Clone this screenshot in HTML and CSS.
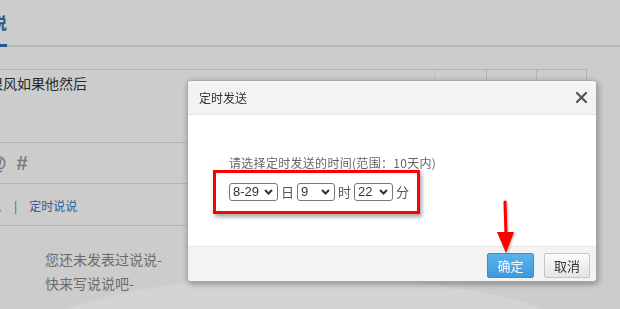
FILE: index.html
```html
<!DOCTYPE html>
<html lang="zh-CN">
<head>
    <meta charset="UTF-8" />
    <title>定时发送</title>
    <link rel="stylesheet" href="styles.css">
</head>
<body>
    <div class="page">
        <div class="tabs">
            <span class="tab active">我的说说</span>
        </div>

        <div class="editor">
            <div class="editor-text">很风如果他然后</div>
            <div class="editor-cell light"></div>
            <div class="editor-cell"></div>
            <div class="editor-cell"></div>
        </div>

        <div class="tools">
            <span class="tool">@</span>
            <span class="tool">#</span>
        </div>

        <div class="links">
            <a class="link first">全部说说</a>
            <span class="sep">|</span>
            <a class="link">定时说说</a>
        </div>

        <div class="empty">
            <p>您还未发表过说说-</p>
            <p>快来写说说吧-</p>
        </div>
    </div>

    <div class="mask"></div>

    <div class="dialog">
        <div class="dialog-head">
            <span class="dialog-title">定时发送</span>
            <svg class="dialog-close" width="11" height="11" viewBox="0 0 11 11">
                <path d="M1 1 L10 10 M10 1 L1 10" stroke="#555" stroke-width="2.2" stroke-linecap="round" />
            </svg>
        </div>
        <div class="dialog-body">
            <div class="hint">请选择定时发送的时间(范围：10天内)</div>
            <div class="pick">
                <div class="sel sel-day">
                    <span>8-29</span>
                    <svg width="9" height="6" viewBox="0 0 9 6"><path d="M1 1 L4.5 4.5 L8 1" fill="none" stroke="#333" stroke-width="2" /></svg>
                </div>
                <span class="unit">日</span>
                <div class="sel sel-hour">
                    <span>9</span>
                    <svg width="9" height="6" viewBox="0 0 9 6"><path d="M1 1 L4.5 4.5 L8 1" fill="none" stroke="#333" stroke-width="2" /></svg>
                </div>
                <span class="unit">时</span>
                <div class="sel sel-min">
                    <span>22</span>
                    <svg width="9" height="6" viewBox="0 0 9 6"><path d="M1 1 L4.5 4.5 L8 1" fill="none" stroke="#333" stroke-width="2" /></svg>
                </div>
                <span class="unit">分</span>
            </div>
        </div>
        <div class="dialog-foot">
            <button class="btn btn-ok">确定</button>
            <button class="btn btn-cancel">取消</button>
        </div>
    </div>

    <svg class="arrow" width="24" height="60" viewBox="0 0 24 60">
        <path d="M12 2 L13 36" stroke="#f00" stroke-width="3" stroke-linecap="round" />
        <path d="M4 32 L21 32 L13 53 Z" fill="#f00" />
    </svg>
</body>
</html>
```

FILE: styles.css
```css
html, body {
    margin: 0;
    padding: 0;
    height: 100%;
    overflow: hidden;
}

body {
    background: #fff;
    font-family: "Noto Sans CJK SC", "Liberation Sans", sans-serif;
    color: #333;
}

.page {
    width: 627px;
    margin-left: -40px;
}

/* tabs */
.tabs {
    height: 45px;
    margin-right: -60px;
    border-bottom: 2px solid #e2e2e2;
    display: flex;
    align-items: flex-end;
}

.tab {
    font-size: 16px;
    line-height: 20px;
    height: 32px;
    margin-bottom: -2px;
    margin-left: -17px;
    color: #2f6db4;
    font-weight: bold;
    border-bottom: 3px solid #2f6db4;
}

/* editor */
.editor {
    margin-top: 22px;
    height: 72px;
    border-top: 1px solid #e2e2e2;
    border-right: 1px solid #e2e2e2;
    display: flex;
}

.editor-text {
    flex: 1;
    font-size: 14px;
    line-height: 20px;
    padding-top: 3px;
    margin-left: 29px;
    color: #333;
}

.editor-cell {
    width: 49px;
    height: 40px;
    border-left: 1px solid #e2e2e2;
}

.editor-cell.light {
    border-left-color: #f0f0f0;
    width: 51px;
}

/* tools */
.tools {
    height: 40px;
    border-top: 1px solid #e2e2e2;
    border-bottom: 1px solid #e2e2e2;
    display: flex;
    align-items: center;
    gap: 10px;
    padding-left: 27px;
}

.tool {
    font-family: "Liberation Sans", sans-serif;
    font-size: 20px;
    font-weight: bold;
    color: #999;
}

/* links */
.links {
    height: 42px;
    border-bottom: 1px solid #e2e2e2;
    display: flex;
    align-items: center;
    font-size: 12px;
    padding-top: 2px;
    box-sizing: border-box;
}

.link {
    color: #3b78c0;
}

.link.first {
    margin-left: -7px;
}

.sep {
    color: #3b78c0;
    margin: 0 12px 0 13px;
}

/* empty state */
.empty {
    padding: 21px 0 0 85px;
    font-size: 14px;
    color: #888;
}

.empty p {
    margin: 0;
    line-height: 24px;
}

/* modal */
.mask {
    position: fixed;
    inset: 0;
    background: radial-gradient(ellipse 300px 82px at 305px 357px, rgba(0, 0, 0, 0.17) 97%, rgba(0, 0, 0, 0.2) 100%);
}

.dialog {
    position: fixed;
    left: 187px;
    top: 80px;
    width: 408px;
    border: 1px solid #a8a8a8;
    border-radius: 4px;
    background: #fff;
    box-shadow: 1px 2px 6px rgba(0, 0, 0, 0.35);
    overflow: hidden;
}

.dialog-head {
    height: 33px;
    background: #f3f3f3;
    border-bottom: 1px solid #e6e6e6;
    display: flex;
    align-items: center;
    justify-content: space-between;
    padding: 0 9px 0 11px;
}

.dialog-title {
    font-size: 12px;
    color: #333;
}

.dialog-body {
    height: 131px;
    box-sizing: border-box;
    padding: 40px 0 0 25px;
}

.hint {
    margin-left: 16px;
    font-size: 12px;
    line-height: 15px;
    letter-spacing: 0.3px;
    color: #666;
}

.pick {
    display: inline-flex;
    align-items: center;
    gap: 3px;
    padding: 9px 8px 10px 13px;
    border: 3px solid #f00;
    box-shadow: 2px 3px 4px rgba(0, 0, 0, 0.35);
}

.sel {
    height: 18px;
    box-sizing: border-box;
    display: flex;
    align-items: center;
    justify-content: space-between;
    padding: 0 4px 0 3px;
    font-family: "Liberation Sans", sans-serif;
    font-size: 13px;
    color: #333;
    background: #fff;
    border: 1px solid #777;
    border-radius: 3px;
}

.sel-day { width: 49px; }
.sel-hour { width: 38px; }
.sel-min { width: 39px; }

.unit {
    font-size: 13px;
    color: #555;
}

.dialog-foot {
    height: 35px;
    box-sizing: border-box;
    border-top: 1px solid #e6e6e6;
    background: #f3f3f3;
    display: flex;
    justify-content: flex-end;
    gap: 10px;
    padding: 6px 6px 0 0;
}

.btn {
    height: 25px;
    width: 47px;
    padding: 0;
    font-family: "Noto Sans CJK SC", sans-serif;
    font-size: 13px;
    border-radius: 2px;
    cursor: pointer;
}

.btn-ok {
    color: #fff;
    background: linear-gradient(#5ab2ee, #3e9ade);
    border: 1px solid #3a8fd2;
}

.btn-cancel {
    width: 46px;
    color: #333;
    background: linear-gradient(#fbfbfb, #e4e4e4);
    border: 1px solid #c4c4c4;
}

/* annotation arrow */
.arrow {
    position: fixed;
    left: 493px;
    top: 200px;
    filter: drop-shadow(1px 1px 1px rgba(0, 0, 0, 0.3));
}
```
